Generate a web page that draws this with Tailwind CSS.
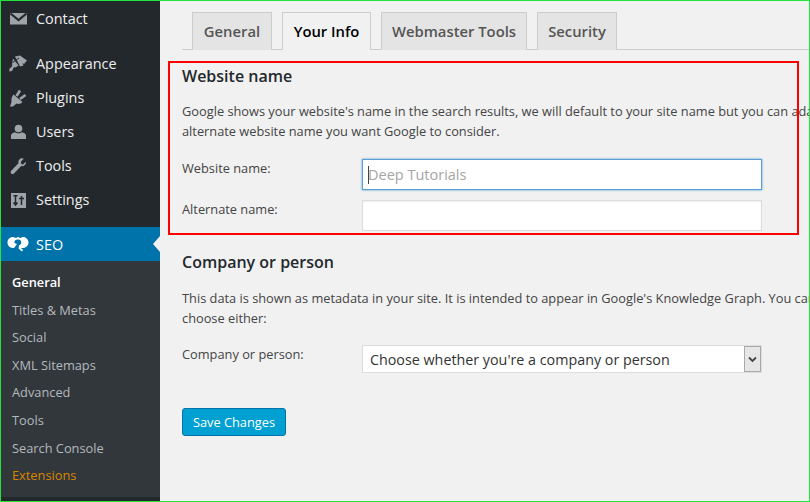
<!DOCTYPE html>
<html>
<head>
<meta charset="utf-8">
<script src="https://cdn.jsdelivr.net/npm/@tailwindcss/browser@4"></script>
</head>
<body class="m-0 overflow-hidden bg-[#f1f1f1]">
<div class="relative flex w-[810px] h-[502px] overflow-hidden bg-[#f1f1f1] font-['Open_Sans',sans-serif] text-[#444]">
  <aside class="w-[160px] h-full shrink-0 flex flex-col bg-[#23282d]">
    <nav class="pt-[2px] text-[14.4px] text-[#eee]">
      <a class="flex items-center h-[34px] pl-[9px]"><svg class="w-[18px] h-[18px] mr-[9px] -mt-[1px]" viewBox="0 0 18 18"><path fill="#9ea3a8" d="M1 3h17v11.500H1z"/><path fill="none" stroke="#23282d" stroke-width="2.200" d="M1.500 3.500 9.500 10 17.500 3.500"/></svg>Contact</a>
      <div class="h-[11px]"></div>
      <a class="flex items-center h-[34px] pl-[9px]"><svg class="w-[18px] h-[18px] mr-[9px] -mt-[1px]" viewBox="0 0 18 18"><path fill="#9ea3a8" d="M6 1.500 11 .5 18 5.500 15 9 13.500 8 14.500 10.500 11 11.500z"/><path fill="#9ea3a8" d="M4.500 4 10 11 7 13 5.500 12.500 3.500 16.500 1 17 .8 14.500 3.800 11.500 3.500 9.500z" transform="translate(-.5 -.5)"/><path fill="none" stroke="#23282d" stroke-width="1" d="M3.500 7.500 10 3"/></svg>Appearance</a>
      <a class="flex items-center h-[34px] pl-[9px]"><svg class="w-[18px] h-[18px] mr-[9px] -mt-[1px]" viewBox="0 0 18 18"><path fill="#9ea3a8" d="M4.500 5.500 13.500 13c-1.500 2-4 2.500-6 1.500L4 17.500H1L2.500 13C2 10 3 7 4.500 5.500z"/><path fill="none" stroke="#9ea3a8" stroke-width="2.600" d="M7.500 7 11 1.500M11 10 16.500 6"/></svg>Plugins</a>
      <a class="flex items-center h-[34px] pl-[9px]"><svg class="w-[18px] h-[18px] mr-[9px] -mt-[1px]" viewBox="0 0 18 18"><circle cx="9.500" cy="5.500" r="3.800" fill="#9ea3a8"/><path fill="#9ea3a8" d="M2 16v-3.500c0-1.500 1.500-2.800 4.300-3.300 1 1.500 5.400 1.500 6.400 0 2.800.5 4.300 1.800 4.300 3.300V16z"/></svg>Users</a>
      <a class="flex items-center h-[34px] pl-[9px]"><svg class="w-[18px] h-[18px] mr-[9px] -mt-[1px]" viewBox="0 0 18 18"><path fill="#9ea3a8" d="M17 5.500c0 2.500-2.500 4.200-4.800 3.500L5 16.500c-.8.800-2 .8-2.800 0s-.8-2 0-2.800L9.500 6.300C8.800 4 10.500 1.300 13 1.300c.7 0 1.300.2 1.800.4L12 4.500v1.800l1.700 1.500 2.800-2.900c.3.200.5.300.5.600z"/></svg>Tools</a>
      <a class="flex items-center h-[34px] pl-[9px]"><svg class="w-[18px] h-[18px] mr-[9px] -mt-[1px]" viewBox="0 0 18 18"><path fill="#9ea3a8" d="M2 2h15v15H2z"/><path fill="none" stroke="#23282d" stroke-width="1.500" d="M6.500 5v9M4.500 11.500l2 2.500 2-2.500M12.500 14V5M10 7.500h5M4.500 4.800h4"/></svg>Settings</a>
    </nav>
    <a class="relative flex items-center h-[34px] mt-[10px] pl-[7px] pt-[1px] bg-[#0073aa] text-[14.4px] text-white"><svg class="w-[22px] h-[16px] mr-[7px] -mt-[1px]" viewBox="0 0 22 16"><path fill="#fff" d="M6 1C2.500 1 .5 3.500 .5 6.500.5 10 3 12 7 12l3-4-2.500-1C7 4.500 9 3.500 11 3.500c2.500 0 4 2 3 4.500l-2 1.500-.5 3 3.500 3 1-1.500-2-2c4 .5 7.500-2 7.500-5.500C21.500 3.500 19 1 16 1l-3 1-2-1-2 1z"/></svg>SEO<span class="absolute right-0 top-[9px] border-y-[8px] border-y-transparent border-r-[7px] border-r-[#f1f1f1]"></span></a>
    <ul class="flex-1 bg-[#32373c] pt-[8px] pl-[12px] text-[12.8px] text-[#b4b9be] leading-[27.6px]">
      <li class="font-semibold text-white">General</li>
      <li>Titles &amp; Metas</li>
      <li>Social</li>
      <li>XML Sitemaps</li>
      <li>Advanced</li>
      <li>Tools</li>
      <li>Search Console</li>
      <li class="text-[#d98500]">Extensions</li>
    </ul>
    <div class="h-[5px] bg-[#23282d]"></div>
  </aside>
  <main class="min-w-0 flex-1 pl-[22px] overflow-hidden">
    <div class="flex pt-[12px] pl-[10px] h-[50px] border-b border-[#ccc] w-[628px] gap-[10px] text-[14.8px] font-semibold">
      <span class="w-[80px] h-[38px] flex items-center justify-center bg-[#e4e4e4] border border-[#ccc] border-b-0 text-[#555]">General</span>
      <span class="w-[89px] h-[38px] flex items-center justify-center bg-[#f1f1f1] border border-[#ccc] border-b-0 text-black relative z-10">Your Info</span>
      <span class="w-[146px] h-[38px] flex items-center justify-center bg-[#e4e4e4] border border-[#ccc] border-b-0 text-[#555]">Webmaster Tools</span>
      <span class="w-[80px] h-[38px] flex items-center justify-center bg-[#e4e4e4] border border-[#ccc] border-b-0 text-[#555]">Security</span>
    </div>
    <h2 class="mt-[15px] text-[16px] leading-[22px] font-semibold text-[#23282d]">Website name</h2>
    <p class="mt-[14px] whitespace-nowrap text-[12.8px] leading-[20px]">Google shows your website's name in the search results, we will default to your site name but you can adapt this<br>alternate website name you want Google to consider.</p>
    <div class="mt-[18px] flex items-start">
      <label class="w-[180px] text-[12.8px] leading-[18px]">Website name:</label>
      <div class="relative flex items-center w-[400px] h-[31px] bg-white border border-[#5b9dd9] shadow-[0_0_2px_rgba(30,140,190,.8)] pl-[5px] text-[14.5px] text-[#a5a5a5]">Deep Tutorials<span class="absolute left-[5px] top-[6px] w-px h-[18px] bg-[#444]"></span></div>
    </div>
    <div class="mt-[10px] flex items-start">
      <label class="w-[180px] text-[12.8px] leading-[18px]">Alternate name:</label>
      <div class="w-[400px] h-[31px] bg-white border border-[#ddd] shadow-[inset_0_1px_2px_rgba(0,0,0,.07)]"></div>
    </div>
    <h2 class="mt-[20px] text-[16px] leading-[22px] font-semibold text-[#23282d]">Company or person</h2>
    <p class="mt-[15px] whitespace-nowrap text-[12.8px] leading-[20px]">This data is shown as metadata in your site. It is intended to appear in Google's Knowledge Graph. You can be either<br>choose either:</p>
    <div class="mt-[17px] flex items-start">
      <label class="w-[180px] text-[12.8px] leading-[18px]">Company or person:</label>
      <div class="flex items-center justify-between w-[400px] h-[28px] bg-white border border-[#ddd] pl-[7px] text-[14.3px] text-[#333]"><span class="pt-[1px]">Choose whether you're a company or person</span><span class="flex items-center justify-center w-[17px] h-[26px] bg-[#e6e6e6] border border-[#aaa]"><svg class="w-[9px] h-[7px]" viewBox="0 0 9 7"><path fill="none" stroke="#444" stroke-width="1.800" d="M1 1.500l3.500 3.500L8 1.500"/></svg></span></div>
    </div>
    <button class="mt-[35px] block w-[104px] h-[28px] pt-[1px] bg-[#00a0d2] border border-[#0073aa] rounded-[3px] text-[12.8px] text-white text-center">Save Changes</button>
  </main>
  <div class="absolute left-[168px] top-[61px] w-[631px] h-[174px] border-2 border-[#f00] pointer-events-none"></div>
  <div class="absolute inset-0 border border-[#22e43c] pointer-events-none"></div>
</div>
</body>
</html>
